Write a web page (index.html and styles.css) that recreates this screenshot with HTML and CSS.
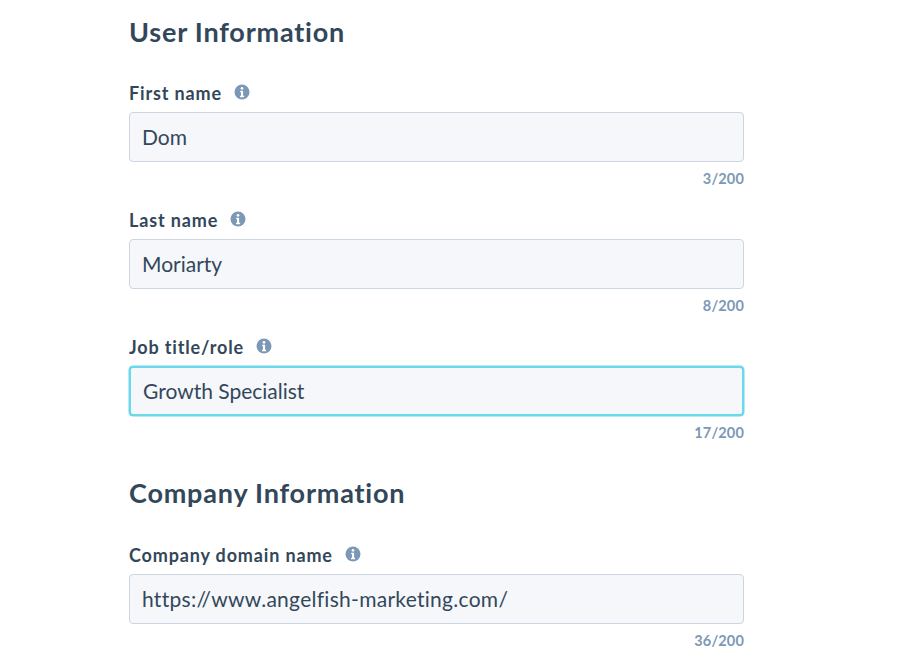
FILE: index.html
```html
<!DOCTYPE html>
<html lang="en">
<head>
    <meta charset="UTF-8">
    <meta name="viewport" content="width=device-width, initial-scale=1.0">
    <title>User Information</title>
    <link rel="stylesheet" href="styles.css">
</head>
<body>
    <svg class="icon-defs" width="0" height="0" aria-hidden="true">
        <symbol id="info" viewBox="0 0 16 16">
            <circle cx="8" cy="8" r="7.5" fill="#7c98b6"/>
            <circle cx="8" cy="4.3" r="1.35" fill="#fff"/>
            <path d="M6.2 6.7h2.9v5.1h1v1.5H6v-1.5h1v-3.6h-.8z" fill="#fff"/>
        </symbol>
    </svg>
    <main class="form">
        <h2 class="section-title">User Information</h2>
        <div class="field">
            <label class="field-label" for="firstName">First name <svg class="info"><use href="#info"/></svg></label>
            <input class="field-input" id="firstName" type="text" value="Dom">
            <div class="counter">3/200</div>
        </div>
        <div class="field">
            <label class="field-label" for="lastName">Last name <svg class="info"><use href="#info"/></svg></label>
            <input class="field-input" id="lastName" type="text" value="Moriarty">
            <div class="counter">8/200</div>
        </div>
        <div class="field">
            <label class="field-label" for="jobTitle">Job title/role <svg class="info"><use href="#info"/></svg></label>
            <input class="field-input focused" id="jobTitle" type="text" value="Growth Specialist">
            <div class="counter">17/200</div>
        </div>
        <h2 class="section-title company">Company Information</h2>
        <div class="field">
            <label class="field-label" for="domain">Company domain name <svg class="info"><use href="#info"/></svg></label>
            <input class="field-input url" id="domain" type="text" value="https://www.angelfish-marketing.com/">
            <div class="counter">36/200</div>
        </div>
    </main>
</body>
</html>
```

FILE: styles.css
```css
body {
    margin: 0;
    height: 663px;
    overflow: hidden;
    background-color: #fff;
    color: #33475b;
    font-family: Lato, "Noto Sans", sans-serif;
}

.icon-defs {
    position: absolute;
}

.form {
    width: 615px;
    margin-left: 129px;
    padding-top: 16px;
}

.section-title {
    margin: 0;
    height: 32px;
    font-size: 27px;
    line-height: 32px;
    font-weight: 700;
    letter-spacing: 0.8px;
}

.section-title.company {
    margin-top: 15px;
    margin-bottom: 34px;
}

.field {
    height: 127px;
    margin-top: 33px;
}

.field + .field,
.company + .field {
    margin-top: 0;
}

.field-label {
    display: flex;
    align-items: center;
    gap: 12px;
    height: 24px;
    font-size: 18px;
    font-weight: 700;
    letter-spacing: 0.85px;
    margin-bottom: 7px;
}

.info {
    width: 16px;
    height: 16px;
    margin-top: -2px;
}

.field-input {
    display: block;
    box-sizing: border-box;
    width: 100%;
    height: 50px;
    padding: 0 12px 2px;
    border: 1.5px solid #cbd6e2;
    border-radius: 4px;
    background-color: #f5f7fa;
    color: #33475b;
    font-family: inherit;
    font-size: 21px;
    outline: none;
}

.field-input.url {
    letter-spacing: 0.28px;
}

.field-input.focused {
    border: 2px solid #6bd8ec;
    box-shadow: 0 0 0 0.5px #6bd8ec;
}

.counter {
    margin-top: 8px;
    font-size: 14.5px;
    line-height: 18px;
    font-weight: 700;
    letter-spacing: 0.15px;
    text-align: right;
    color: #7c98b6;
}
```
